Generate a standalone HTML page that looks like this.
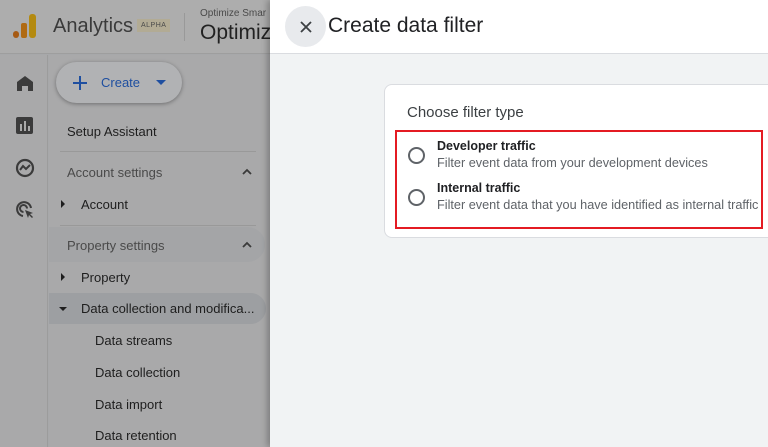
<!DOCTYPE html>
<html><head><meta charset="utf-8"><style>
*{margin:0;padding:0;box-sizing:border-box}
body{width:768px;height:447px;overflow:hidden;position:relative;font-family:"Liberation Sans",Arial,sans-serif;background:#a7a8aa}
.hdr{position:absolute;left:0;top:0;width:270px;height:54px;background:#adadad;border-bottom:1px solid #9e9e9e}
.rail{position:absolute;left:0;top:55px;width:48px;height:392px;background:#a9a9aa;border-right:1px solid #9c9c9c}
.nav{position:absolute;left:49px;top:55px;width:221px;height:392px;background:#a9a9aa}
.t{position:absolute;font-size:13px;color:#1e1e1e;white-space:nowrap}
.g{color:#4a4a4a}
.panel{position:absolute;left:270px;top:0;width:498px;height:447px;background:#f1f3f4;box-shadow:-3px 0 6px rgba(0,0,0,.25)}
.ph{position:absolute;left:0;top:0;width:498px;height:54px;background:#fff;border-bottom:1px solid #dadce0}
.card{position:absolute;left:114px;top:84px;width:400px;height:154px;background:#fff;border:1px solid #dadce0;border-radius:8px}
.radio{position:absolute;width:17px;height:17px;border:2px solid #5f6368;border-radius:50%}
</style></head><body>
<div class="hdr">
 <svg style="position:absolute;left:13px;top:14px" width="24" height="26"><rect x="0" y="17" width="6" height="7" rx="3" fill="#a65a14"/><rect x="8" y="9" width="6" height="15" rx="2" fill="#b06a12"/><rect x="16" y="0" width="7" height="24" rx="3" fill="#b48a10"/></svg>
 <div class="t" style="left:53px;top:15px;font-size:20px;color:#3a3a3a">Analytics</div>
 <div class="t" style="left:137px;top:19px;font-size:7px;background:#b2ab94;color:#4a4a4a;padding:3px 4px;letter-spacing:.5px">ALPHA</div>
 <div style="position:absolute;left:184px;top:13px;width:1px;height:28px;background:#999"></div>
 <div class="t" style="left:200px;top:8px;font-size:10px;color:#4a4a4a">Optimize Smar</div>
 <div class="t" style="left:200px;top:21px;font-size:21px;color:#222">Optimiz</div>
</div>
<div class="rail">
 <svg style="position:absolute;left:16px;top:20px" width="18" height="16"><path d="M9 1L1 7v9h5v-5h6v5h5V7z" fill="#3b3b3b"/></svg>
 <svg style="position:absolute;left:16px;top:62px" width="18" height="18"><rect width="17" height="17" rx="2" fill="#3b3b3b"/><rect x="4" y="7" width="2" height="7" fill="#aaa"/><rect x="8" y="4" width="2" height="10" fill="#aaa"/><rect x="12" y="9" width="2" height="5" fill="#aaa"/></svg>
 <svg style="position:absolute;left:15px;top:103px" width="20" height="20"><circle cx="10" cy="10" r="8" fill="none" stroke="#3b3b3b" stroke-width="2.2"/><path d="M5 12l3-4 3 3 4-4" fill="none" stroke="#3b3b3b" stroke-width="2"/></svg>
 <svg style="position:absolute;left:15px;top:145px" width="20" height="20"><path d="M16 8A7 7 0 1 0 8 16" fill="none" stroke="#3b3b3b" stroke-width="2"/><path d="M12 8.5A3.5 3.5 0 1 0 8.5 12" fill="none" stroke="#3b3b3b" stroke-width="2"/><path d="M10 10l8 3-3 1 3 3-1 1-3-3-1 3z" fill="#3b3b3b"/></svg>
</div>
<div class="nav">
 <div style="position:absolute;left:7px;top:7px;width:126px;height:41px;border-radius:21px;background:#b1b2b4;box-shadow:0 1px 4px rgba(0,0,0,.35)"></div>
 <svg style="position:absolute;left:23px;top:20px" width="16" height="16"><path d="M8 1v14M1 8h14" stroke="#1f4fa0" stroke-width="2"/></svg>
 <div class="t" style="left:52px;top:20px;color:#1f4fa0">Create</div>
 <svg style="position:absolute;left:107px;top:25px" width="10" height="6"><path d="M0 0h10L5 5z" fill="#1f4fa0"/></svg>
 <div class="t" style="left:18px;top:69px">Setup Assistant</div>
 <div style="position:absolute;left:11px;top:96px;width:196px;height:1px;background:#999"></div>
 <div class="t g" style="left:18px;top:110px">Account settings</div>
 <svg style="position:absolute;left:193px;top:113px" width="10" height="7"><path d="M1 6l4-4 4 4" fill="none" stroke="#3a3a3a" stroke-width="1.8"/></svg>
 <svg style="position:absolute;left:12px;top:145px" width="5" height="8"><path d="M0 0l4 4-4 4z" fill="#1e1e1e"/></svg>
 <div class="t" style="left:32px;top:142px">Account</div>
 <div style="position:absolute;left:11px;top:170px;width:196px;height:1px;background:#999"></div>
 <div style="position:absolute;left:0;top:172px;width:216px;height:35px;background:#a4a5a7;border-radius:0 18px 18px 0"></div>
 <div class="t g" style="left:18px;top:183px">Property settings</div>
 <svg style="position:absolute;left:193px;top:186px" width="10" height="7"><path d="M1 6l4-4 4 4" fill="none" stroke="#3a3a3a" stroke-width="1.8"/></svg>
 <svg style="position:absolute;left:12px;top:218px" width="5" height="8"><path d="M0 0l4 4-4 4z" fill="#1e1e1e"/></svg>
 <div class="t" style="left:32px;top:215px">Property</div>
 <div style="position:absolute;left:0;top:238px;width:217px;height:31px;background:#9d9fa2;border-radius:0 16px 16px 0"></div>
 <svg style="position:absolute;left:10px;top:252px" width="8" height="5"><path d="M0 0h8L4 4z" fill="#1e1e1e"/></svg>
 <div class="t" style="left:32px;top:246px">Data collection and modifica...</div>
 <div class="t" style="left:46px;top:278px">Data streams</div>
 <div class="t" style="left:46px;top:310px">Data collection</div>
 <div class="t" style="left:46px;top:342px">Data import</div>
 <div class="t" style="left:46px;top:373px">Data retention</div>
</div>
<div class="panel">
 <div class="ph">
  <div style="position:absolute;left:15px;top:6px;width:41px;height:41px;border-radius:50%;background:#e8eaed"></div>
  <svg style="position:absolute;left:30px;top:21px" width="12" height="12"><path d="M1 1l10 10M11 1L1 11" stroke="#3c4043" stroke-width="1.8"/></svg>
  <div class="t" style="left:58px;top:14px;font-size:21px;color:#202124">Create data filter</div>
 </div>
 <div class="card">
  <div class="t" style="left:22px;top:19px;font-size:15px;color:#3c4043">Choose filter type</div>
  <div class="radio" style="left:23px;top:62px"></div>
  <div class="t" style="left:52px;top:54px;font-size:12.5px;font-weight:bold;color:#202124">Developer traffic</div>
  <div class="t" style="left:52px;top:71px;font-size:12.7px;color:#5f6368">Filter event data from your development devices</div>
  <div class="radio" style="left:23px;top:104px"></div>
  <div class="t" style="left:52px;top:96px;font-size:12.5px;font-weight:bold;color:#202124">Internal traffic</div>
  <div class="t" style="left:52px;top:113px;font-size:12.7px;color:#5f6368">Filter event data that you have identified as internal traffic</div>
 </div>
 <div style="position:absolute;left:125px;top:130px;width:368px;height:99px;border:2px solid #e41b23"></div>
</div>
</body></html>
